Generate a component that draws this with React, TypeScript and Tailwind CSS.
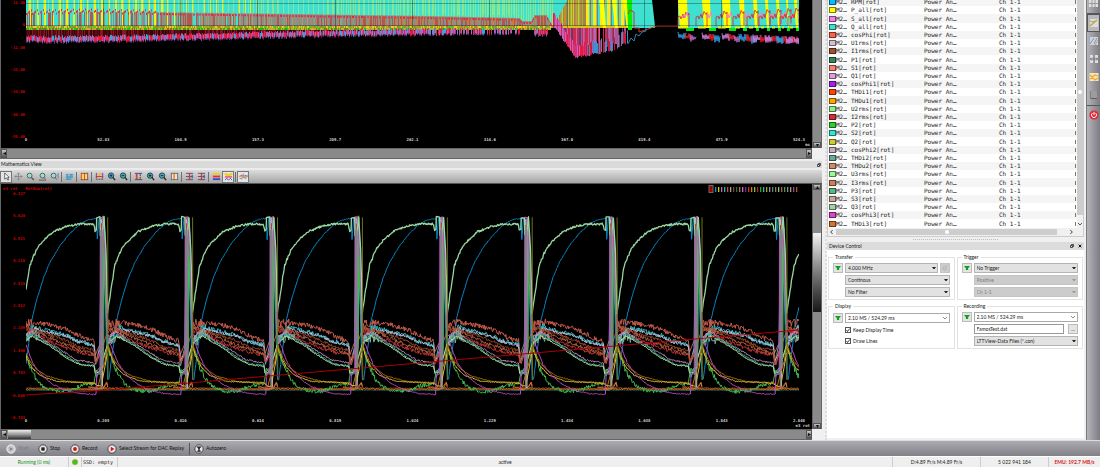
import React from 'react'
import clsx from 'clsx'

type Channel = { name: string; color: string }

const channels: Channel[] = [
  { name: 'RPM[rot]', color: '#00bfff' },
  { name: 'P_all[rot]', color: '#ffff00' },
  { name: 'S_all[rot]', color: '#ee82ee' },
  { name: 'Q_all[rot]', color: '#40e0d0' },
  { name: 'cosPhi[rot]', color: '#ff6347' },
  { name: 'U1rms[rot]', color: '#d8bfd8' },
  { name: 'I1rms[rot]', color: '#a0522d' },
  { name: 'P1[rot]', color: '#2e8b57' },
  { name: 'S1[rot]', color: '#fa8072' },
  { name: 'Q1[rot]', color: '#dda0dd' },
  { name: 'cosPhi1[rot]', color: '#a020f0' },
  { name: 'THDi1[rot]', color: '#ff4500' },
  { name: 'THDu1[rot]', color: '#ffa500' },
  { name: 'U2rms[rot]', color: '#90ee90' },
  { name: 'I2rms[rot]', color: '#d03030' },
  { name: 'P2[rot]', color: '#32cd32' },
  { name: 'S2[rot]', color: '#30e8d0' },
  { name: 'Q2[rot]', color: '#cdcd30' },
  { name: 'cosPhi2[rot]', color: '#c0b0c0' },
  { name: 'THDi2[rot]', color: '#66aa99' },
  { name: 'THDu2[rot]', color: '#d08c70' },
  { name: 'U3rms[rot]', color: '#98fb98' },
  { name: 'I3rms[rot]', color: '#d08058' },
  { name: 'P3[rot]', color: '#58b888' },
  { name: 'S3[rot]', color: '#c8a898' },
  { name: 'Q3[rot]', color: '#a8d0a8' },
  { name: 'cosPhi3[rot]', color: '#d848c8' },
  { name: 'THDi3[rot]', color: '#d2742c' },
]

// Small seeded generator so the traces look the same on every render
const makeRandom = (seed: number) => () => {
  seed = (seed * 1664525 + 1013904223) % 4294967296
  return seed / 4294967296
}

type Point = [number, number]

const interpolate = (points: Point[], x: number) => {
  if (x <= points[0][0]) return points[0][1]
  for (let i = 1; i < points.length; i++) {
    const [x0, y0] = points[i - 1]
    const [x1, y1] = points[i]
    if (x <= x1) return y0 + ((y1 - y0) * (x - x0)) / (x1 - x0)
  }
  return points[points.length - 1][1]
}

/* ---------- Overview recording ---------- */

const buildOverview = () => {
  const rnd = makeRandom(11)
  const layers: { color: string; d: string }[] = []
  const column = (color: string, x: number, y0: number, y1: number) => {
    const last = layers[layers.length - 1]
    const seg = `M${x} ${y0.toFixed(1)}V${y1.toFixed(1)}`
    if (last && last.color === color) last.d += seg
    else layers.push({ color, d: seg })
  }
  const pick = (colors: string[]) => colors[Math.floor(rnd() * colors.length)]
  const top: Point[] = [[0, 11], [60, 10], [200, 12], [400, 15], [493, 17], [496, 20], [505, 20], [508, 14], [520, 14], [527, 26], [541, 0]]
  const bottom: Point[] = [[0, 43], [15, 44], [100, 43], [300, 38], [493, 35], [496, 32], [505, 32], [508, 37], [520, 37], [527, 27], [535, 38], [549, 59], [585, 52], [602, 43]]

  let next = 3
  let period = 7.4
  for (let x = 0; x < 602; x++) {
    const px = x + 0.5
    const t = interpolate(top, x)
    const b = interpolate(bottom, x) - rnd() * 2.5
    if (x < 527) {
      if (x >= next) {
        column(x < 230 ? '#e8f020' : '#8ee884', px, 0, 26)
        if (x < 150 && period > 4) column('#f4f410', px + 1, 0, 26)
        next += period
        period = Math.max(2.4, period - 0.055)
      }
      if (x % 5 === 2) column('#7fe6a4', px, 0, 15)
      if (x > 20) {
        const grey = x > 230 || rnd() < x / 230
        if (grey) column(pick(['#85968a', '#a08c70', '#8c8c84', x > 330 ? '#c08048' : '#98a080']), px, t + 1, 26)
      }
      const wave = x < 130 ? (x % 6) * 0.7 : 0
      if (x % 3 !== 1) column(pick(['#ee2038', '#e03848', '#c84878']), px, t + 2 - wave, t + 4 - wave)
      if (rnd() < 0.3) column('#b05850', px, t + 2, 30)
      column(pick(['#e0d018', '#c0a028', '#60c020', '#a08838']), px, 26, 28)
      column(pick(['#d0b020', '#10c810', '#906828', '#b0b030']), px, 28, Math.min(30, b))
      if (b > 34) {
        column(pick(x > 400 ? ['#b01840', '#701020', '#a03058', '#901030'] : ['#40080c', '#5c0c14', '#801828', '#300608']), px, 30, b - 4)
        column(pick(['#e01838', '#d04088', '#9070d8', '#40a0e0', '#e8204c', '#b060a0']), px, b - 6, b - 1)
        column(pick(['#702060', '#a01838', '#3868a8']), px, b - 1, b)
      }
    } else {
      if (x < 560) column(pick(['#a0b040', '#d08828', '#8c8870', '#c0d030', '#a88040']), px, Math.max(0, t), 27)
      else if (x % 7 < 3) column('#ffe818', px, 0, 28)
      else if (x % 7 === 4) column('#c86828', px, 0, 28)
      column('#d8c020', px, 26, 28)
      const shade = x < 570 ? 1 : 0.55
      if (rnd() < shade) column(pick(['#a85898', '#b868a8', '#703868', '#d02850']), px, 28, b - 5)
      if (rnd() < shade + 0.15) column(pick(x < 560 ? ['#e81840', '#d83070', '#c860c0'] : ['#d01838', '#4090d0', '#9060b0']), px, b - 14 + rnd() * 4, b)
    }
  }
  return layers
}

const overviewLayers = buildOverview()
const burstBars = [[652, 9], [676, 8], [696, 8], [713, 5], [727, 4], [739, 3], [750, 3], [760, 2], [768, 3]]

const OverviewPlot: React.FC = () => {
  const rnd = makeRandom(5)
  const squiggle = (x: number, w: number, y: number, h: number) => {
    let d = `M${x} ${y}`
    for (let i = 1; i <= w; i++) d += `L${x + i} ${(y + (i % 2 ? h : 0) + rnd() * 3).toFixed(1)}`
    return d
  }
  return (
    <svg viewBox="0 0 773 137" preserveAspectRatio="none" className="h-full w-full" aria-label="Recording overview">
      <path d="M0 0H626L629 26V28H0Z" fill="#40e0d0" />
      <rect x="652" width="121" height="28" fill="#40e0d0" />
      <g strokeWidth="1.05" fill="none">
        {overviewLayers.map((layer, i) => (
          <path key={i} d={layer.d} stroke={layer.color} />
        ))}
      </g>
      <path d="M573 0h5l2 28h-3zM586 0h4l2 28h-3zM597 0h4l5 28h-5z" fill="#ffff00" />
      <path d="M601 0h5v30h-4z" fill="#00f000" />
      <path d="M602 14l2-4 4 2v16h5v4l18-6h21" fill="none" stroke="#c83828" />
      <path d="M602 44l3-6 3 3 2-7 3 2 3-4 4-1V28" fill="none" stroke="#3080b0" />
      {burstBars.map(([x, w], i) => (
        <g key={x}>
          <path d={`M${x} 0h${w}l1 28h-${w - 1}z`} fill="#ffff00" />
          <path d={`M${x - (i === 0 ? 0 : 4)} 27.500h${w}`} stroke="#e8f010" strokeWidth="2" />
          <path d={`M${x + w - 1} 29.500h${Math.max(3, w - 1)}`} stroke="#00e810" strokeWidth="3" />
          <path d={`M${x - (i === 0 ? 0 : 6)} 26V17l2-1 1 3 2-5 1 4 2-${6 + i / 2} 2 3 1-2v14`} fill="none" stroke="#e02030" strokeWidth=".8" />
          <path d={`M${x + 4} 18l2-4 1 4 2-6 1 5`} fill="none" stroke="#f080c0" />
          <path d={squiggle(x, 8, 32 + i * 0.6, 5)} fill="none" stroke={i % 3 === 0 ? '#2898d8' : '#c878d0'} />
          <path d={squiggle(x + 7, 7, 33 + i * 0.5, 5)} fill="none" stroke="#e01828" />
          <path d={squiggle(x + 12, Math.min(6, 773 - x - 12), 34 + i * 0.6, 5)} fill="none" stroke={i % 2 ? '#2898d8' : '#a868b8'} />
        </g>
      ))}
      <g stroke="#000" strokeOpacity=".3">
        <path d="M0 3.500H773M0 25.500H773M77.500 0V28M154.500 0V28M231.500 0V28M309.500 0V28M386.500 0V28M463.500 0V28M541.500 0V28M618.500 0V28M695.500 0V28" />
      </g>
    </svg>
  )
}

/* ---------- Mathematics view ---------- */

type Trace = { color: string; noise: number; points: Point[]; width?: number }

const CYCLE = 254.7
const traces: Trace[] = [
  { color: '#287060', noise: 1, points: [[10, 630], [300, 631], [318, 622], [323, 630]] },
  { color: '#b04818', noise: 2, points: [[10, 620], [60, 624], [300, 626], [312, 618], [320, 606], [323, 618]] },
  { color: '#d87830', noise: 2, points: [[10, 622], [60, 627], [298, 628], [312, 622], [320, 608], [323, 622]] },
  { color: '#0884c4', noise: 3, points: [[72, 600], [95, 420], [110, 360], [130, 295], [150, 247], [180, 197], [210, 160], [240, 132], [262, 120], [290, 115], [292, 178], [297, 114], [306, 118], [312, 250], [323, 600]] },
  { color: '#c85c4c', noise: 15, points: [[68, 430], [110, 428], [160, 436], [210, 452], [250, 473], [282, 483], [286, 520], [299, 490], [303, 480], [304, 115], [306, 620], [310, 115], [318, 300], [323, 440]] },
  { color: '#38b8c0', noise: 14, points: [[68, 490], [100, 442], [150, 454], [200, 466], [230, 482], [282, 495], [287, 550], [299, 500], [305, 115], [308, 400], [314, 150], [323, 470]] },
  { color: '#b8b8d8', noise: 9, points: [[68, 480], [100, 446], [150, 458], [200, 468], [230, 484], [282, 497], [287, 545], [303, 505], [304, 115], [307, 620], [309, 112], [315, 250], [323, 470]] },
  { color: '#984424', noise: 9, points: [[68, 445], [100, 450], [150, 465], [200, 482], [240, 502], [282, 511], [286, 540], [303, 510], [308, 112], [323, 445]] },
  { color: '#c03434', noise: 11, points: [[68, 450], [110, 464], [150, 485], [200, 504], [250, 520], [282, 524], [286, 550], [302, 520], [304, 130], [312, 200], [323, 460]] },
  { color: '#b05c40', noise: 11, points: [[68, 438], [110, 455], [150, 474], [200, 495], [250, 512], [282, 522], [290, 550], [303, 510], [323, 450]] },
  { color: '#b888c0', noise: 5, points: [[68, 470], [95, 455], [130, 480], [180, 508], [230, 540], [282, 549], [286, 580], [302, 560], [302, 112], [310, 112], [318, 300], [323, 480]] },
  { color: '#80a8a0', noise: 26, points: [[68, 490], [95, 466], [120, 475]] },
  { color: '#30a890', noise: 6, points: [[68, 490], [95, 464], [150, 494], [200, 530], [240, 552], [282, 557], [290, 590], [302, 560], [323, 500]] },
  { color: '#b8e090', noise: 4, points: [[68, 492], [95, 468], [150, 498], [200, 534], [240, 554], [282, 559], [286, 580], [300, 575], [308, 540], [323, 490]] },
  { color: '#40bc50', noise: 12, points: [[68, 500], [80, 535], [90, 562], [110, 600], [130, 622], [170, 635], [210, 632], [240, 618], [282, 610], [290, 570], [302, 580], [311, 500], [312, 112], [314, 300], [323, 500]] },
  { color: '#b87808', noise: 2, points: [[68, 490], [80, 525], [90, 545], [110, 568], [140, 588], [200, 604], [285, 608], [294, 620], [305, 575], [315, 545], [322, 500]] },
  { color: '#e0c038', noise: 3, points: [[68, 500], [80, 533], [95, 562], [120, 586], [170, 604], [282, 610], [294, 618], [304, 618], [315, 560], [322, 520]] },
  { color: '#c048c8', noise: 3, points: [[68, 470], [80, 500], [100, 552], [130, 590], [160, 614], [200, 632], [240, 641], [288, 643], [290, 582], [300, 582], [301, 112], [308, 112], [316, 240], [323, 470]] },
  { color: '#98d8a0', noise: 6, width: 1.3, points: [[68, 400], [80, 318], [90, 255], [110, 207], [130, 182], [160, 155], [200, 139], [240, 132], [281, 132], [285, 152], [289, 150], [290, 112], [300, 112], [301, 165], [306, 168], [312, 112], [318, 210], [323, 400]] },
  { color: '#707018', noise: 0, points: [[323, 112], [324, 600]] },
  { color: '#808088', noise: 0, width: 1.5, points: [[303, 150], [304, 620], [306, 150], [309, 560]] },
]

const tracePath = (trace: Trace, seed: number) => {
  const rnd = makeRandom(seed)
  const first = trace.points[0][0]
  const last = trace.points[trace.points.length - 1][0]
  let d = ''
  for (let k = 0; k < 10; k++) {
    let pen = 'M'
    const knots = trace.points.map((p) => p[0]).filter((x) => x > 284)
    const xs: number[] = []
    for (let x = first; x <= Math.min(last, 284); x += 2) xs.push(x)
    for (const x of xs.concat(knots)) {
      const plotX = (x - 78 + k * CYCLE) / 3
      if (plotX < 0 || plotX > 773) continue
      const noise = (rnd() - 0.5) * trace.noise * (x < 110 ? 1.6 : 1)
      const index = x > 284 ? trace.points.find((p) => p[0] === x)![1] : interpolate(trace.points, x)
      d += `${pen}${plotX.toFixed(1)} ${((index + noise) / 3 - 4).toFixed(1)}`
      pen = 'L'
    }
  }
  return d
}

const tracePaths = traces.map((trace, i) => tracePath(trace, i + 3))

const MathPlot: React.FC = () => (
  <svg viewBox="0 10 773 224" preserveAspectRatio="none" className="h-full w-full" aria-label="Mathematics plot">
    <g fill="none" strokeLinejoin="round">
      {traces.map((trace, i) => (
        <path key={i} d={tracePaths[i]} stroke={trace.color} strokeWidth={trace.width ?? 1} />
      ))}
      <path d="M0 211L82 206L773 146" stroke="#a80000" />
    </g>
  </svg>
)

const MathLegend: React.FC = () => (
  <div className="flex h-2.5 shrink-0 items-center justify-between pr-[13px] pl-0.5 text-[#c80000]">
    <div className="flex gap-2">
      <span>e3 rot</span>
      <span>RotNum[rot]</span>
    </div>
    <svg viewBox="0 0 91 10" className="h-2.5 w-[91px]">
      <rect x="1" y="1.500" width="4" height="7" fill="#a00000" stroke="#686868" />
      {channels.map((c, i) => (
        <rect key={c.name} x={7 + i * 3} y="3" width="1.300" height="5" fill={c.color} fillOpacity=".8" />
      ))}
    </svg>
  </div>
)

/* ---------- Plot frame ---------- */

type PlotFrameProps = {
  yLabels: string[]
  xLabels: string[]
  unit: string
  legend?: React.ReactNode
  className?: string
  children: React.ReactNode
}

const PlotFrame: React.FC<PlotFrameProps> = ({ yLabels, xLabels, unit, legend, className, children }) => (
  <div className="flex min-w-0 flex-1 flex-col border-l border-[#666] bg-black font-['DejaVu_Sans_Mono',monospace] text-[4px] leading-none font-bold">
    {legend}
    <div className="flex min-h-0 flex-1 pr-[13px]">
      <div className={clsx('flex w-[25px] shrink-0 flex-col justify-between pr-px text-[#c80000]', className)}>
        {yLabels.map((label) => (
          <span key={label} className="flex h-0 items-center justify-end">{label}</span>
        ))}
      </div>
      <div className="h-full min-w-0 flex-1">{children}</div>
    </div>
    <div className="flex h-[11px] shrink-0 flex-col gap-px pt-px pl-[25px] text-[#d0d0d0]">
      <div className="mr-[13px] flex justify-between">
        {xLabels.map((label) => (
          <span key={label} className="flex w-0 justify-center">{label}</span>
        ))}
      </div>
      <span className="pr-0.5 text-right">{unit}</span>
    </div>
  </div>
)

const ArrowButton: React.FC<{ label: string; className?: string; d: string }> = ({ label, className, d }) => (
  <button
    type="button"
    aria-label={label}
    className={clsx('flex shrink-0 items-center justify-center border border-[#555] bg-linear-to-b from-[#ccc] to-[#555]', className)}
  >
    <svg viewBox="0 0 4 4" className="size-[3px]"><path d={d} fill="#111" /></svg>
  </button>
)

const HorizontalBar: React.FC<{ thumb?: boolean }> = ({ thumb }) => (
  <div className="flex h-[11px] shrink-0 bg-[#f0f0f0]">
    <div className="flex flex-1 items-stretch gap-px border-y border-l border-[#666] bg-[#8a8a8a]">
      <ArrowButton label="Scroll left" className="w-1.5" d="M4 0V4L0 2Z" />
      {thumb && <div className="w-[23px] bg-linear-to-b from-[#eee] via-[#999] to-[#333]" />}
      <ArrowButton label="Scroll right" className="ml-auto w-1.5" d="M0 0V4L4 2Z" />
    </div>
    <div className="w-2.5" />
  </div>
)

/* ---------- Toolbar icons ---------- */

const toolIcons: Record<string, React.ReactNode> = {
  pointer: <path d="M3 1V8L5 6.500L6.500 9L7.500 8.500L6.300 6H8Z" fill="#fff" stroke="#222" strokeWidth=".7" />,
  move: <path d="M5 1V9M1 5H9M3.500 2.500L5 1L6.500 2.500M3.500 7.500L5 9L6.500 7.500M2.500 3.500L1 5L2.500 6.500M7.500 3.500L9 5L7.500 6.500" fill="none" stroke="#888" />,
  zoom: <g fill="#8fe0d8" stroke="#555"><circle cx="4" cy="4" r="2.700" /><path d="M6 6L8.800 8.800" strokeWidth="1.500" /></g>,
  zoomX: <g fill="#8fe0d8" stroke="#555"><circle cx="5" cy="4" r="2.700" /><path d="M6.500 6L8.500 8M1 9H9" /></g>,
  zoomY: <g fill="#8fe0d8" stroke="#555"><circle cx="4" cy="4" r="2.700" /><path d="M5.500 6L7.500 8.500" /><path d="M9 1V7" stroke="#6070b0" /></g>,
  grid: <path d="M1 3H3M5 3H9M1 5.500H9M1 8H7M3 2V9M6.500 2V7" fill="none" stroke="#4a9cc8" strokeWidth="1.500" />,
  fit: <g><rect x="1" y="1.500" width="8" height="7" fill="#f8dc40" /><path d="M1.500 1V9M5 1V9" stroke="#d04050" /><path d="M8.500 1V9" stroke="#5050c0" /><path d="M1 1.500H9M1 8.500H9" stroke="#a04040" /></g>,
  range: <g><rect x="1" y="1" width="8" height="5" fill="#f4b098" /><path d="M1.500 1V7M8.500 1V7" stroke="#3850c0" /><path d="M5 1V6" stroke="#e8c020" /><path d="M1 5H9" stroke="#d03020" /><path d="M1 8H9" stroke="#444" strokeDasharray="2 1" /></g>,
  zoomIn: <g><circle cx="4.500" cy="4" r="3" fill="#48b0a0" stroke="#203858" /><path d="M3 4H6M4.500 2.500V5.500" stroke="#102060" /><path d="M6.500 6L9 9" stroke="#222" strokeWidth="1.500" /></g>,
  zoomOut: <g><circle cx="4.500" cy="4" r="3" fill="#48b0a0" stroke="#203858" /><path d="M3 4H6" stroke="#102060" /><path d="M6.500 6L9 9" stroke="#222" strokeWidth="1.500" /></g>,
  cursorY: <g><path d="M1 1.500H9M1 8.500H9" stroke="#444" /><path d="M3 2V8" stroke="#d04050" strokeWidth="2" /><path d="M7 2V8" stroke="#5060d0" strokeWidth="1.500" /><path d="M4 5H9" stroke="#e0c030" /></g>,
  cursors: <g><rect x="1" y="1" width="8" height="8" fill="#f4e8a0" /><path d="M1.500 1V9M8.500 1V9" stroke="#4858c8" /><path d="M4.500 1V9" stroke="#d83838" /><path d="M1 8.500H9M1 1.500H9" stroke="#666" /></g>,
  split: <g fill="none"><path d="M1 1.500H9M1 5H9M1 8.500H9" stroke="#555" /><path d="M5 1V9" stroke="#d83040" strokeWidth="1.500" /><path d="M8 3V7" stroke="#4858d8" strokeWidth="1.500" /></g>,
  layers: <g strokeWidth="2"><path d="M1 2H9" stroke="#f0d010" /><path d="M1 5H9" stroke="#e03040" /><path d="M1 8H9" stroke="#3848c0" /></g>,
  stack: <g fill="none"><path d="M1 2L5 4L9 2" stroke="#f0d010" strokeWidth="2.500" /><path d="M1 5.500H9" stroke="#e84858" strokeWidth="1.500" /><path d="M1 9L3 7L5 9L7 7L9 9" stroke="#5040d0" /></g>,
  wave: <g fill="none" strokeWidth="1.300"><path d="M0.500 5L3 3.500L5 6L7 4L9.500 5" stroke="#e84838" /><path d="M0.500 7L3 7.500L5 3L7 7L9.500 3.500" stroke="#68a8e8" /><path d="M1 4L4 5.500L9 5.500" stroke="#f0a050" /></g>,
}

const toolGroups: string[][] = [
  ['pointer', 'move', 'zoom', 'zoomX', 'zoomY'],
  ['grid'],
  ['fit'],
  ['range', 'zoomIn', 'zoomOut'],
  ['cursorY', 'zoomIn', 'zoomOut', 'cursors'],
  ['split', 'split'],
  ['layers', 'stack'],
  ['wave'],
]

const pressedTools = ['pointer', 'stack', 'wave']

const MathToolbar: React.FC = () => (
  <div className="flex h-3.5 shrink-0 items-center border-b border-[#555] bg-linear-to-b from-[#dcdcdc] to-[#a6a6a6]">
    {toolGroups.map((group, g) => (
      <React.Fragment key={g}>
        {g > 0 && <div className="mx-px h-2.5 w-px bg-[#707070]" />}
        {group.map((tool, i) => (
          <button
            key={i}
            type="button"
            aria-label={tool}
            className={clsx(
              'flex h-3 w-3 items-center justify-center',
              pressedTools.includes(tool) && 'border border-[#777] bg-[#e4e4e4]'
            )}
          >
            <svg viewBox="0 0 10 10" className="size-[9px] shrink-0">{toolIcons[tool]}</svg>
          </button>
        ))}
      </React.Fragment>
    ))}
  </div>
)

const RestoreIcon = () => (
  <svg viewBox="0 0 8 8" className="size-1"><path d="M3 3V1H7V5H5M1 3H5V7H1Z" fill="none" stroke="#222" strokeWidth="1.500" /></svg>
)

/* ---------- Channel list ---------- */

const ChannelList: React.FC = () => (
  <div className="flex flex-col border border-t-0 border-[#ccc] bg-white">
    <div className="flex h-[228px]">
      <div className="flex min-w-0 flex-1 items-end overflow-hidden">
        <table className="h-[230px] w-full table-fixed border-collapse font-['DejaVu_Sans_Mono',monospace] text-[6px] leading-[8px] text-[#222]">
          <colgroup>
            <col className="w-2" />
            <col className="w-[15px]" />
            <col className="w-[73px]" />
            <col className="w-[75px]" />
            <col />
            <col className="w-0.5" />
          </colgroup>
          <tbody>
            {channels.map((c, i) => (
              <tr key={c.name} className={i % 2 ? 'bg-white' : 'bg-[#f5f5f5]'}>
                <td className="p-0 pl-px">
                  <div className="h-1.5 w-[7px] border border-black/50" style={{ backgroundColor: c.color }} />
                </td>
                <td className="p-0 whitespace-nowrap">M2…</td>
                <td className="p-0 whitespace-nowrap">{c.name}</td>
                <td className="p-0 whitespace-nowrap">Power An…</td>
                <td className="p-0 whitespace-nowrap">Ch 1-1</td>
                <td className="p-0"><div className="h-1 w-px bg-[#777]" /></td>
              </tr>
            ))}
          </tbody>
        </table>
      </div>
      <div className="flex w-1.5 flex-col items-center justify-between bg-[#f0f0f0]">
        <div className="flex h-[215px] w-full items-center justify-center bg-[#cdcdcd]">
          <div className="mb-8 size-1 rounded-xs bg-white" />
        </div>
        <svg viewBox="0 0 6 4" className="mb-0.5 w-1"><path d="M0 0L3 3L6 0" fill="none" stroke="#555" strokeWidth="1.500" /></svg>
      </div>
    </div>
    <div className="flex h-2 items-center gap-0.5 bg-[#f0f0f0] px-0.5">
      <svg viewBox="0 0 4 6" className="h-1 w-1"><path d="M3 0L0 3L3 6" fill="none" stroke="#444" strokeWidth="1.500" /></svg>
      <div className="flex h-1.5 flex-1 items-center justify-center bg-[#cdcdcd]">
        <div className="size-1 rounded-xs bg-white" />
      </div>
      <svg viewBox="0 0 4 6" className="mr-2 ml-2.5 h-1 w-1"><path d="M1 0L4 3L1 6" fill="none" stroke="#444" strokeWidth="1.500" /></svg>
    </div>
  </div>
)

/* ---------- Device control ---------- */

const ApplyButton: React.FC<{ label: string }> = ({ label }) => (
  <button type="button" aria-label={label} className="flex size-2.5 shrink-0 items-center justify-center border border-[#bbb] bg-[#e4e4e4]">
    <svg viewBox="0 0 8 6" className="w-1.5"><path d="M0 0H8L5.500 3V6H2.500V3Z" fill="#10a020" /></svg>
  </button>
)

const Combo: React.FC<{ label: string; value: string; disabled?: boolean }> = ({ label, value, disabled }) => (
  <div className="grid h-2.5 min-w-0 flex-1 items-center">
    <select
      aria-label={label}
      disabled={disabled}
      className={clsx(
        'col-start-1 row-start-1 h-2.5 w-full appearance-none border pl-0.5 leading-[8px]',
        disabled ? 'border-[#c4c4c4] bg-[#ccc] text-[#808080]' : 'border-[#b4b4b4] bg-[#e2e2e2]'
      )}
    >
      <option>{value}</option>
    </select>
    <svg viewBox="0 0 6 4" className="pointer-events-none col-start-1 row-start-1 mr-0.5 w-1 justify-self-end">
      <path d="M0 0H6L3 4Z" fill={disabled ? '#999' : '#222'} />
    </svg>
  </div>
)

const EditCombo: React.FC<{ label: string; value: string }> = ({ label, value }) => (
  <div className="flex h-2.5 min-w-0 flex-1 items-center border border-[#aaa] bg-white pr-0.5">
    <input aria-label={label} defaultValue={value} className="min-w-0 flex-1 pl-0.5 leading-[8px]" />
    <button type="button" aria-label={`${label} options`} className="flex w-1">
      <svg viewBox="0 0 6 4" className="w-full"><path d="M0 0L3 3L6 0" fill="none" stroke="#555" /></svg>
    </button>
  </div>
)

const Group: React.FC<{ title: string; children: React.ReactNode }> = ({ title, children }) => (
  <fieldset className="flex h-[46px] min-w-0 flex-col border border-[#e2e2e2] px-1">
    <legend className="px-0.5 leading-[6px]">{title}</legend>
    {children}
  </fieldset>
)

const CheckRow: React.FC<{ label: string }> = ({ label }) => (
  <label className="flex items-center gap-0.5 leading-[8px]">
    <span className="grid size-1.5 items-center">
      <input type="checkbox" defaultChecked className="col-start-1 row-start-1 size-1.5 appearance-none border border-[#555] bg-white" />
      <svg viewBox="0 0 6 6" className="pointer-events-none col-start-1 row-start-1 size-1.5"><path d="M1.500 3L2.500 4.500L4.800 1.500" fill="none" stroke="#111" strokeWidth=".8" /></svg>
    </span>
    {label}
  </label>
)

const DeviceControl: React.FC = () => (
  <section className="flex flex-1 flex-col bg-white">
    <header className="flex h-2 items-center gap-1 bg-[#dcdcdc] px-0.5">
      <h2 className="flex-1">Device Control</h2>
      <button type="button" aria-label="Float"><RestoreIcon /></button>
      <button type="button" aria-label="Close">
        <svg viewBox="0 0 6 6" className="size-1"><path d="M1 1L5 5M5 1L1 5" stroke="#111" strokeWidth="1.500" /></svg>
      </button>
    </header>
    <div className="grid grid-cols-2 gap-x-0.5 gap-y-[3px] px-px pt-1">
      <Group title="Transfer">
        <div className="flex gap-0.5 pt-[3px]">
          <ApplyButton label="Apply transfer" />
          <div className="flex flex-1 flex-col gap-0.5">
            <div className="flex gap-0.5">
              <Combo label="Sample rate" value="4.000 MHz" />
              <button type="button" aria-label="Clock settings" disabled className="flex size-2.5 items-center justify-center border border-[#c4c4c4] bg-[#ccc]">
                <svg viewBox="0 0 8 8" className="size-1.5"><circle cx="3.500" cy="4.500" r="2" fill="none" stroke="#aaa" /><path d="M5 3L7 1" stroke="#aaa" /></svg>
              </button>
            </div>
            <Combo label="Mode" value="Continous" />
            <Combo label="Filter" value="No Filter" />
          </div>
        </div>
      </Group>
      <Group title="Trigger">
        <div className="flex gap-0.5 pt-[3px]">
          <ApplyButton label="Apply trigger" />
          <div className="flex flex-1 flex-col gap-0.5">
            <Combo label="Trigger mode" value="No Trigger" />
            <Combo label="Slope" value="Positive" disabled />
            <Combo label="Trigger channel" value="Ch 1-1" disabled />
          </div>
        </div>
      </Group>
      <Group title="Display">
        <div className="flex gap-0.5 pt-1">
          <ApplyButton label="Apply display" />
          <div className="flex flex-1 flex-col gap-[3px]">
            <div className="flex"><EditCombo label="Display length" value="2.10 MS / 524.29 ms" /></div>
            <CheckRow label="Keep Display Time" />
            <CheckRow label="Draw Lines" />
          </div>
        </div>
      </Group>
      <Group title="Recording">
        <div className="flex gap-0.5 pt-[3px]">
          <ApplyButton label="Apply recording" />
          <div className="flex flex-1 flex-col gap-0.5">
            <div className="flex"><EditCombo label="Recording length" value="2.10 MS / 524.29 ms" /></div>
            <div className="flex gap-1">
              <input aria-label="File name" defaultValue="FamosTest.dat" className="h-2.5 min-w-0 flex-1 border border-[#999] pl-0.5" />
              <button type="button" className="size-2.5 border border-[#bbb] bg-[#e4e4e4] leading-none">...</button>
            </div>
            <Combo label="File type" value="LTTView-Data Files (*.con)" />
          </div>
        </div>
      </Group>
    </div>
  </section>
)

/* ---------- Right tool strip ---------- */

const stripIcons: { label: string; icon: React.ReactNode }[] = [
  { label: 'Cursor', icon: <g><rect x="1" y="1" width="8" height="8" fill="#ddd" /><path d="M1 8L8 2" stroke="#c8a820" strokeWidth="1.500" /><path d="M1 3L4 4L6 3" fill="none" stroke="#999" /></g> },
  { label: 'Edit curve', icon: <g><rect x="1" y="1" width="8" height="8" fill="#d4d4d8" /><path d="M1 8L5 2M5 8L8 2" stroke="#7098c8" /><path d="M6 9L9 4" stroke="#c8a060" /></g> },
  { label: 'Split view', icon: <g><path d="M1 1H4V9H1ZM6 1H9V9H6Z" fill="#ddd" /><path d="M1 5H9M3 3.500L1.500 5L3 6.500M7 3.500L8.500 5L7 6.500" fill="none" stroke="#666" strokeWidth=".8" /></g> },
  { label: 'Signals', icon: <g><rect x="0.500" y="1" width="9" height="8" fill="#f4e4c0" /><path d="M1 3L3 5L6 3L9 4M1 7L4 6L6 8L9 6" fill="none" stroke="#f0a820" strokeWidth="1.200" /></g> },
  { label: 'Panel', icon: <g><rect x="1" y="1" width="8" height="8" fill="#9c9c9c" /><path d="M1 8.500H9" stroke="#606060" /><path d="M1.500 1V9M8.500 1V9" stroke="#808080" /></g> },
]

const ToolStrip: React.FC = () => (
  <nav className="flex w-3.5 shrink-0 flex-col items-center border-l border-[#77777c] bg-linear-to-r from-[#b4b4ba] to-[#7c7c82]">
    <button type="button" aria-label="Grid" className="flex h-[13px] items-start">
      <svg viewBox="0 0 10 8" className="w-2.5"><path d="M0 0H9V7H0Z" fill="#e0e0e0" /><path d="M3 0V7M6 0V7M0 3.500H9" stroke="#999" /></svg>
    </button>
    <div className="h-px w-full bg-[#55555a]" />
    {stripIcons.map(({ label, icon }, i) => (
      <button
        key={label}
        type="button"
        aria-label={label}
        className={clsx('flex h-[18px] w-full items-center justify-center', i === 0 && 'border border-[#55555a] bg-[#b8b8bc]')}
      >
        <svg viewBox="0 0 10 10" className="size-2.5 shrink-0">{icon}</svg>
      </button>
    ))}
    <div className="mt-px h-px w-full bg-[#55555a]" />
    <button type="button" aria-label="Power" className="mt-1">
      <svg viewBox="0 0 12 12" className="size-2.5">
        <circle cx="6" cy="6" r="5.500" fill="#e02838" />
        <path d="M4 3.800A3 3 0 1 0 8 3.800M6 2.200V6" fill="none" stroke="#fff" strokeWidth="1.200" />
      </svg>
    </button>
  </nav>
)

/* ---------- Bottom bars ---------- */

const RoundIcon: React.FC<{ children: React.ReactNode; dim?: boolean }> = ({ children, dim }) => (
  <svg viewBox="0 0 12 12" className="size-2.5">
    <circle cx="6" cy="6" r="5" fill={dim ? '#c8c8cc' : '#e8e8e8'} stroke={dim ? '#eee' : '#444'} strokeWidth="1.200" />
    {children}
  </svg>
)

const BottomToolbar: React.FC = () => (
  <div className="flex h-4 shrink-0 items-center border-t border-[#ddd] bg-linear-to-b from-[#acabb1] to-[#828187] pl-1.5 text-[#111]">
    <button type="button" disabled className="flex w-8 items-center gap-0.5 text-[#7c7b82]">
      <RoundIcon dim><path d="M4.500 3.500L8.500 6L4.500 8.500Z" fill="#888" /></RoundIcon>Start
    </button>
    <button type="button" className="flex w-8 items-center gap-0.5">
      <RoundIcon><path d="M4 4H8V8H4Z" fill="#222" /></RoundIcon>Stop
    </button>
    <button type="button" className="flex w-[37px] items-center gap-0.5">
      <RoundIcon><circle cx="6" cy="6" r="2.300" fill="#e01010" /></RoundIcon>Record
    </button>
    <button type="button" className="flex w-[82px] items-center gap-0.5 whitespace-nowrap">
      <RoundIcon><path d="M4.500 3.200L9 6L4.500 8.800Z" fill="#e01010" /></RoundIcon>Select Stream for DAC Replay
    </button>
    <div className="mr-1 h-3 w-px bg-[#55555a]" />
    <button type="button" className="flex items-center gap-0.5">
      <RoundIcon><path d="M3.500 3.500H8.500M6 8V5M4 8.500H8" stroke="#111" strokeWidth="1.300" /><path d="M4 4H8L6 6.500Z" fill="#111" /></RoundIcon>Autozero
    </button>
  </div>
)

const StatusBar: React.FC = () => (
  <footer className="flex h-[11px] shrink-0 items-stretch border-t border-white bg-[#efefef] leading-[11px]">
    <div className="w-[69px] border-r border-[#ccc] text-center text-[#109018]">Running (0 ms)</div>
    <div className="flex w-3 items-center justify-center">
      <svg viewBox="0 0 8 8" className="size-1.5"><circle cx="4" cy="4" r="3.800" fill="#58b818" /></svg>
    </div>
    <div className="w-[37px] border-x border-[#ccc] pl-px font-['DejaVu_Sans_Mono',monospace] text-[5px]">SSD: empty</div>
    <div className="flex-1 border-r border-[#ccc] text-center">active</div>
    <div className="w-[88px] border-r border-[#ccc] text-center">D:4.89 Fr/s M:4.89 Fr/s</div>
    <div className="w-[68px] border-r border-[#ccc] text-center">5 022 941 184</div>
    <div className="w-[51px] text-center font-bold text-[#d01818]">EMU: 192.7 MB/s</div>
  </footer>
)

const overviewY = ['11.00', '0', '-11.00', '-22.00', '-33.00', '-44.00', '-55.00']
const overviewX = ['0', '52.43', '104.9', '157.3', '209.7', '262.1', '314.6', '367.0', '419.4', '471.9', '524.3']
const mathY = ['6.327', '5.624', '4.921', '4.218', '3.515', '2.812', '2.109', '1.406', '0.703', '-0.000', '-0.703']
const mathX = ['0', '0.205', '0.410', '0.614', '0.819', '1.024', '1.229', '1.434', '1.638', '1.843', '2.048']

export default function App() {
  return (
    <div className="flex h-screen flex-col overflow-hidden bg-[#f0f0f0] font-['Lato',sans-serif] text-[5px] leading-none text-[#222]">
      <div className="flex min-h-0 flex-1">
        <main className="flex min-w-0 flex-1 flex-col">
          <div className="flex h-[148px] shrink-0">
            <PlotFrame yLabels={overviewY} xLabels={overviewX} unit="ms" className="pt-[3px]">
              <OverviewPlot />
            </PlotFrame>
            <div className="flex w-2.5 flex-col justify-end border-x border-[#666] bg-[#8a8a8a]">
              <ArrowButton label="Scroll down" className="h-1.5" d="M0 0H4L2 4Z" />
            </div>
          </div>
          <HorizontalBar />
          <header className="flex h-[11px] shrink-0 items-center border-y-2 border-[#ececec] bg-[#dadada] px-px">
            <h2 className="flex-1">Mathematics View</h2>
            <button type="button" aria-label="Float"><RestoreIcon /></button>
          </header>
          <MathToolbar />
          <div className="flex min-h-0 flex-1">
            <PlotFrame yLabels={mathY} xLabels={mathX} unit="e3 rot" legend={<MathLegend />}>
              <MathPlot />
            </PlotFrame>
            <div className="flex w-2.5 flex-col border-x border-[#666] bg-[#8a8a8a]">
              <ArrowButton label="Scroll up" className="h-1.5" d="M2 0L4 4H0Z" />
              <div className="mt-[43px] h-[79px] bg-linear-to-b from-[#f4f4f4] to-[#181818]" />
              <ArrowButton label="Scroll down" className="mt-auto h-1.5" d="M0 0H4L2 4Z" />
            </div>
          </div>
          <HorizontalBar thumb />
        </main>

        <div className="w-[5px] shrink-0 border-r-2 border-dotted border-[#ddd] bg-[#f0f0f0]" />
        <aside className="flex w-[257px] shrink-0 flex-col pb-0.5">
          <ChannelList />
          <div className="flex h-[5px] items-center justify-center">
            <div className="w-[85px] border-t border-dotted border-[#bbb]" />
          </div>
          <DeviceControl />
        </aside>
        <div className="w-0.5 shrink-0" />
        <ToolStrip />
      </div>
      <BottomToolbar />
      <StatusBar />
    </div>
  )
}
